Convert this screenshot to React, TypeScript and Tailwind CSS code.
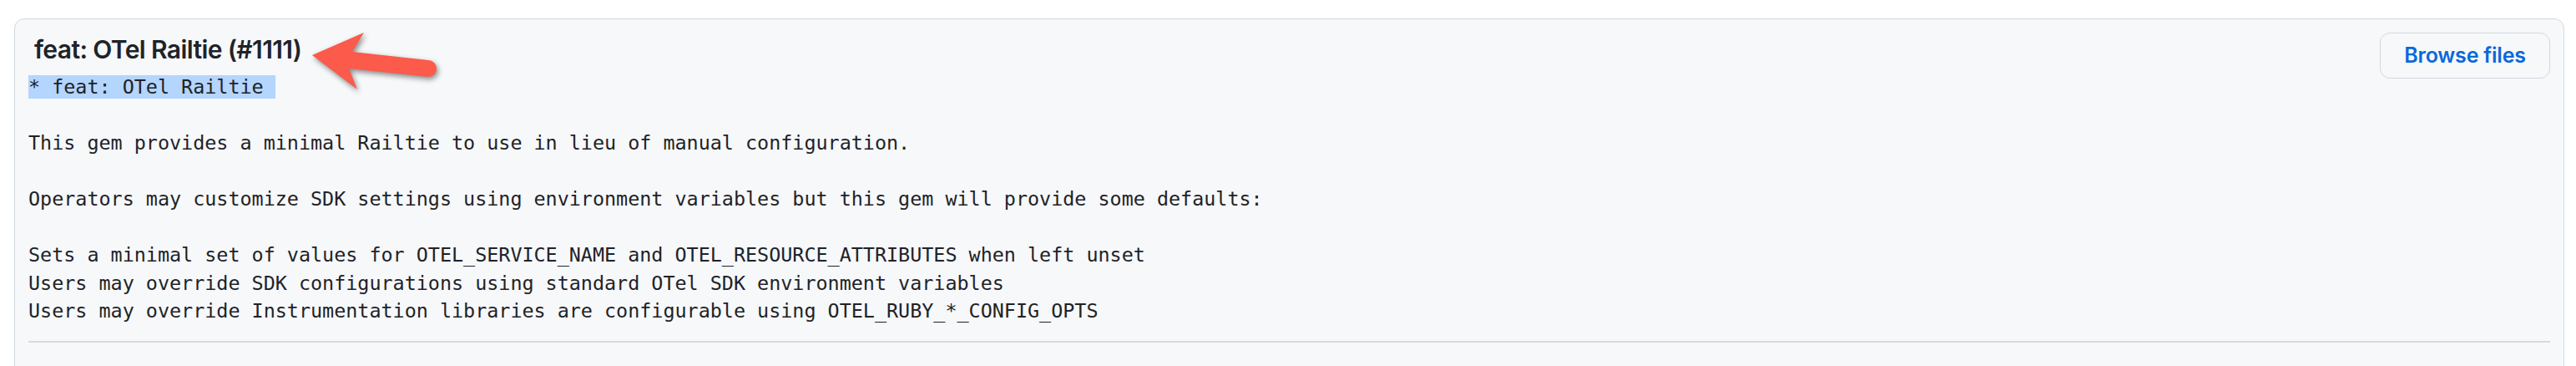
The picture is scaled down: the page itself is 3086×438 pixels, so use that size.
import React from 'react';

const bodyLines = [
  '',
  'This gem provides a minimal Railtie to use in lieu of manual configuration.',
  '',
  'Operators may customize SDK settings using environment variables but this gem will provide some defaults:',
  '',
  'Sets a minimal set of values for OTEL_SERVICE_NAME and OTEL_RESOURCE_ATTRIBUTES when left unset',
  'Users may override SDK configurations using standard OTel SDK environment variables',
  'Users may override Instrumentation libraries are configurable using OTEL_RUBY_*_CONFIG_OPTS',
];

const Arrow: React.FC = () => (
  <svg
    width="180"
    height="110"
    viewBox="0 0 180 110"
    className="absolute left-[360px] top-[20px] drop-shadow-[2px_3px_3px_rgba(0,0,0,0.45)]"
  >
    <path
      d="M14 46 L76 19 L62 42 L153 52 A10 10 0 0 1 153 72 L58 62 L68 87 Z"
      fill="#fc5a4b"
      strokeLinejoin="round"
    />
  </svg>
);

const App: React.FC = () => {
  return (
    <div className="relative min-h-screen bg-white pt-[22px] pl-[17px] pr-[14px]">
      <div className="rounded-[12px] border border-[#d1d9e0] bg-[#f6f8fa] px-4 pt-4 pb-[60px]">
        <div className="flex items-start justify-between">
          <div className="flex-1">
            <h1 className="ml-[7px] font-['Inter',sans-serif] text-[30px] leading-[40px] font-semibold tracking-[-0.6px] text-[#1f2328]">
              feat: OTel Railtie (#1111)
            </h1>
            <pre className="mt-[9px] font-['DejaVu_Sans_Mono',monospace] text-[23.4px] leading-[33.5px] text-[#1f2328]">
              <span className="bg-[#b4d5fd]">{'* feat: OTel Railtie '}</span>
              {'\n' + bodyLines.join('\n')}
            </pre>
          </div>
          <button className="h-[55px] w-[204px] shrink-0 rounded-[12px] border border-[#d1d9e0] bg-[#f6f8fa] font-['Inter',sans-serif] text-[25px] font-semibold tracking-[-0.2px] text-[#0969da]">
            Browse files
          </button>
        </div>
        <div className="mt-[18px] h-[2px] bg-[#d8dadd]" />
      </div>
      <Arrow />
    </div>
  );
};

export default App;
